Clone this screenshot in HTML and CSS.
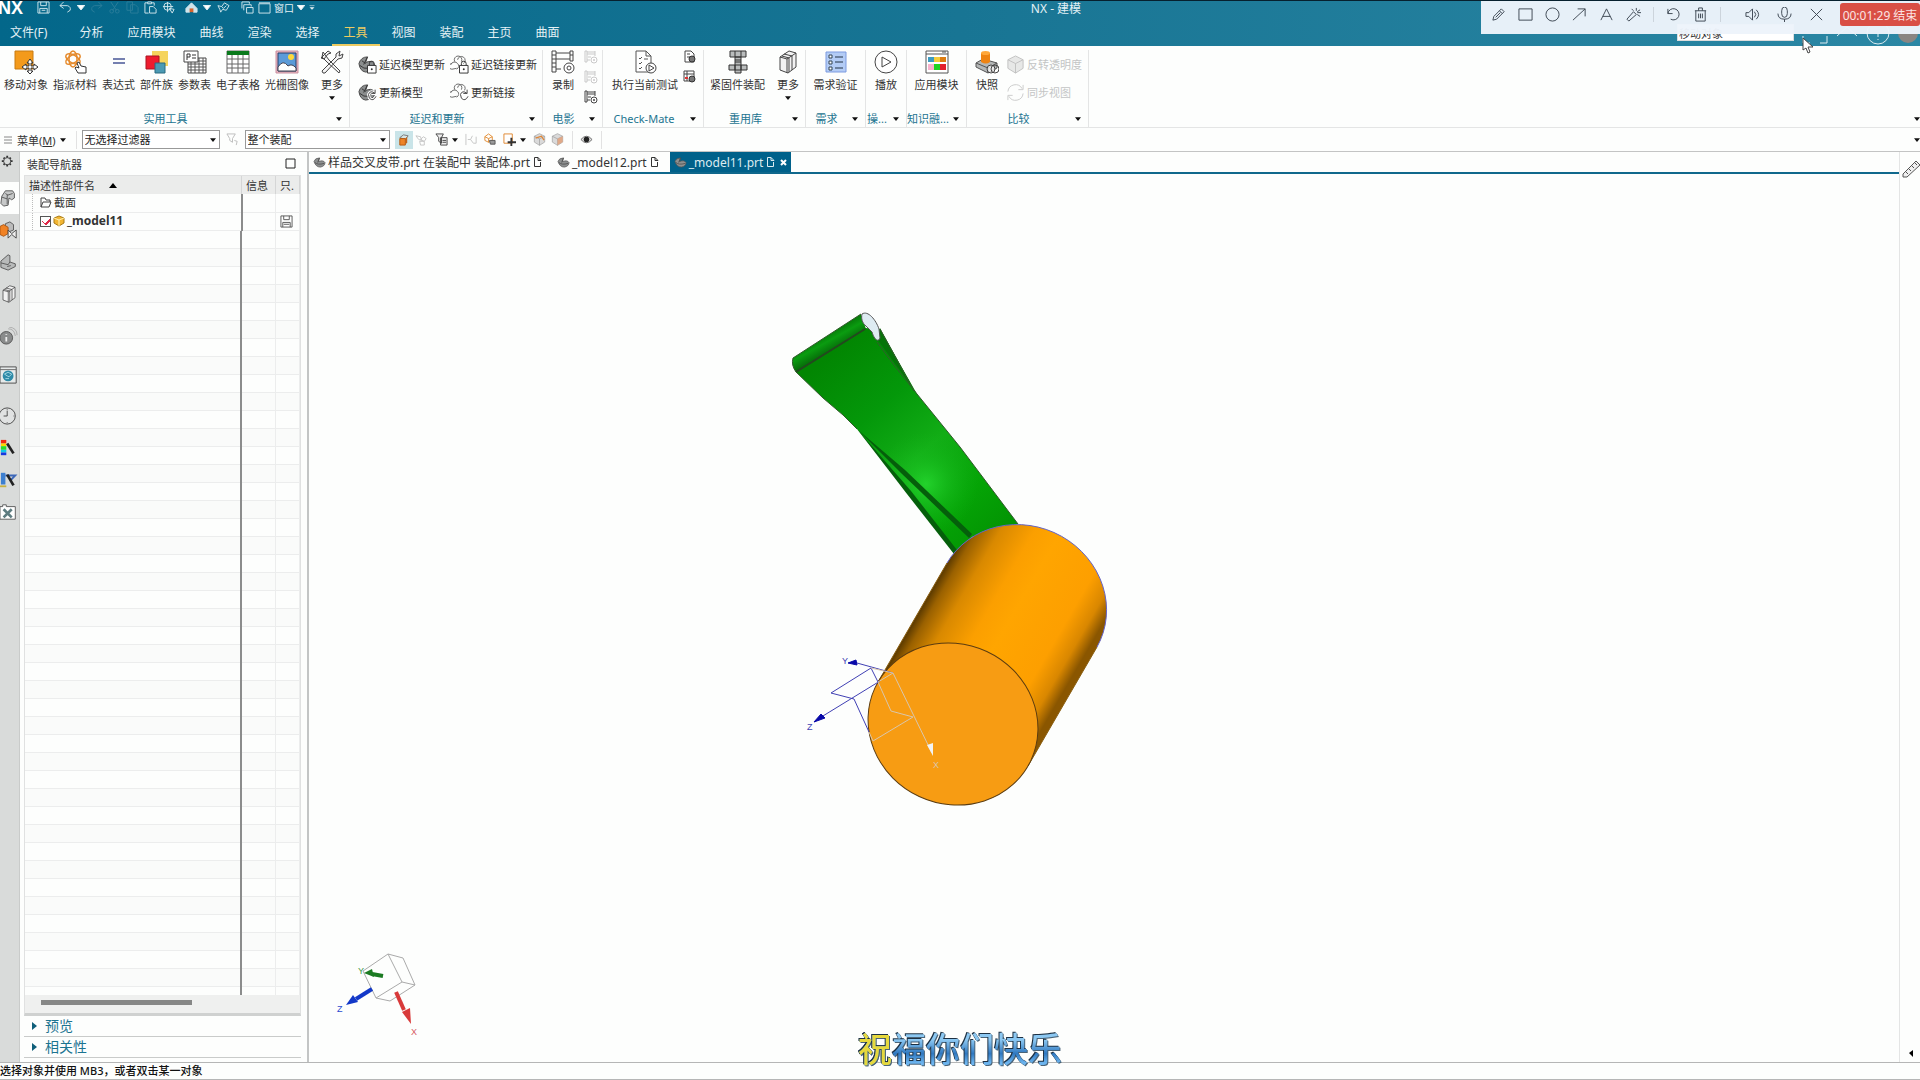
FILE: index.html
```html
<!DOCTYPE html>
<html lang="zh-CN">

<head>
    <meta charset="UTF-8">
    <meta name="viewport" content="width=device-width, initial-scale=1.0">
    <title>NX - 建模</title>
    <link rel="stylesheet" href="styles.css">
</head>

<body>
    <!-- Shared icons -->
    <svg class="defs" aria-hidden="true">
        <symbol id="caret" viewBox="0 0 8 5"><path d="M0 0h8L4 5z" fill="currentColor"/></symbol>
        <symbol id="part" viewBox="0 0 14 12">
            <path d="M1 5Q2 1 7 1l-1 4q5-2 7 1 0 4-5 5-5 0-7-6z" fill="#8d9090" stroke="#555" stroke-width=".8"/>
            <path d="M2 6q3 3 10 1M7 1L5 6" fill="none" stroke="#444" stroke-width=".8"/>
        </symbol>
        <symbol id="page" viewBox="0 0 8 10"><path d="M4 .5H.5v9h6V5M4 .5v3h3L4 .5" fill="none" stroke="currentColor"/></symbol>
        <symbol id="books" viewBox="0 0 24 24">
            <path d="M4 7l9-6 7 2v14l-8 6-8-3z" fill="#f2f2f2" stroke="#444"/>
            <path d="M4 7l7 2 9-6M11 9v14M6 6l7 2M13 8v14M8 4l8 2M16 6v14" fill="none" stroke="#444"/>
        </symbol>
        <symbol id="model" viewBox="0 0 20 20">
            <path d="M1 9Q3 2 10 2L8 8q6-3 9 1v5q-3 4-9 4-6-1-7-9z" fill="#8b8e8e" stroke="#444"/>
            <path d="M2 11q4 4 9 3M10 2L6 10M4 6l4 3" fill="none" stroke="#333"/>
        </symbol>
        <symbol id="chain" viewBox="0 0 20 20">
            <path d="M5 7a4 4 0 1 1 7 0M2 9a3 3 0 0 0 0 6l5-1M1 10a4 4 0 0 1 7-1q3 3-1 6M8 5a4 4 0 1 1 6 4" fill="none" stroke="#666"/>
        </symbol>
        <symbol id="lock" viewBox="0 0 20 20">
            <path d="M12 11V9a2.500 2.500 0 0 1 5 0v2" fill="none" stroke="#333"/>
            <path d="M10 11h9v8h-9z" fill="#fff" stroke="#333"/><circle cx="14.500" cy="15" r="1" fill="#333"/>
        </symbol>
        <symbol id="sync" viewBox="0 0 20 20">
            <path d="M18 11q-5-4-7 1l1 4q4 4 7-2M18 7v4h-4" fill="none" stroke="#fff" stroke-width="3"/>
            <path d="M18 11q-5-4-7 1l1 4q4 4 7-2M18 7v4h-4" fill="none" stroke="#444"/>
        </symbol>
        <symbol id="film" viewBox="0 0 14 14">
            <path d="M1 1h2v11H1zM3 4h8M3 2h8M11 1v5M3 10h3M4 7h3" fill="none" stroke="currentColor"/>
            <circle cx="10" cy="10" r="3" fill="#fff" stroke="currentColor"/><circle cx="10" cy="10" r="1" fill="currentColor"/>
        </symbol>
        <symbol id="cube" viewBox="0 0 20 20">
            <path d="M10 1l8 4v9l-8 5-8-5V5z" fill="#dadada" stroke="#999"/>
            <path d="M2 5l8 4 8-4M10 9v10" fill="none" stroke="#999"/>
        </symbol>
    </svg>

    <header class="header">
        <div class="title-row">
            <span class="logo">NX</span>
            <div class="quick">
                <button class="q q-save" aria-label="保存"><svg viewBox="0 0 14 14"><path d="M1 1h12v12H1zM4 1v4h6V1M3 13V8h8v5M5 10h4" /></svg></button>
                <button class="q" aria-label="撤消"><svg viewBox="0 0 14 14"><path d="M5 1L1 5l4 3M1 5h8q4 1 3 5l-3 2"/></svg></button>
                <button class="q q-caret" aria-label="撤消列表"><svg><use href="#caret"/></svg></button>
                <button class="q dim" aria-label="重做"><svg viewBox="0 0 14 14"><path d="M9 1l4 4-4 3M13 5H5q-4 1-3 5l3 2"/></svg></button>
                <button class="q dim" aria-label="剪切"><svg viewBox="0 0 14 14"><path d="M3 1l6 9M11 1L5 10"/><circle cx="4" cy="11" r="2"/><circle cx="10" cy="11" r="2"/></svg></button>
                <button class="q dim" aria-label="复制"><svg viewBox="0 0 14 14"><path d="M1 1h6v9H1zM5 4h5l3 3v6H5z"/></svg></button>
                <button class="q" aria-label="粘贴"><svg viewBox="0 0 14 14"><path d="M4 2H1v11h4M4 1h4v2H4zM8 2h3v3M6 6h4l3 3v4H6z"/></svg></button>
                <button class="q" aria-label="重复命令"><svg viewBox="0 0 14 14"><circle cx="6" cy="6" r="4"/><path d="M1 6h11M6 1v11M8 8l5 1-2 4z"/></svg></button>
                <button class="q q-home" aria-label="触控"><svg viewBox="0 0 14 14"><path d="M1 8l6-6 6 6v4H9V8H5v4H1z" fill="#cfe3ea"/><path d="M5 8h4v4H5z" fill="#d8632b" stroke="none"/></svg></button>
                <button class="q q-caret" aria-label="触控列表"><svg><use href="#caret"/></svg></button>
                <button class="q q-gap" aria-label="捕捉"><svg viewBox="0 0 14 14"><path d="M1 5l4 1 3-4 5 3-3 5-4-1-2 3-1-3zM5 6l2 2 3-3"/></svg></button>
                <button class="q q-gap" aria-label="层叠"><svg viewBox="0 0 14 14"><path d="M1 8V1h8v2M3 10V4h8v2M6 7h7v6H6z"/></svg></button>
                <button class="q q-window"><svg viewBox="0 0 14 14"><path d="M1 3h12v10H1zM1 2h12"/></svg>窗口<svg class="caret"><use href="#caret"/></svg></button>
                <button class="q q-caret" aria-label="自定义"><svg viewBox="0 0 8 8"><path d="M0 1h8M1 4h6L4 7z" fill="#fff"/></svg></button>
            </div>
            <h1 class="title">NX - 建模</h1>
        </div>
        <nav class="tabs">
            <a class="tab tab-file" href="#">文件(F)</a>
            <a class="tab" href="#">分析</a>
            <a class="tab" href="#">应用模块</a>
            <a class="tab" href="#">曲线</a>
            <a class="tab" href="#">渲染</a>
            <a class="tab" href="#">选择</a>
            <a class="tab active" href="#">工具</a>
            <a class="tab" href="#">视图</a>
            <a class="tab" href="#">装配</a>
            <a class="tab" href="#">主页</a>
            <a class="tab" href="#">曲面</a>
            <div class="header-tools">
                <input class="finder" type="text" aria-label="命令查找器" value="移动对象">
                <button aria-label="全屏"><svg width="26" height="22" viewBox="0 0 26 22"><path d="M1 14v7h7M18 21h7v-7" fill="none" stroke="#dcebf0"/></svg></button>
                <button aria-label="最小化功能区"><svg width="22" height="22" viewBox="0 0 22 22"><path d="M1 14L11 5l10 9" fill="none" stroke="#dcebf0"/></svg></button>
                <button aria-label="帮助"><svg width="24" height="24" viewBox="0 0 24 24"><circle cx="12" cy="12" r="11" fill="none" stroke="#dcebf0"/><path d="M12 12v4M12 18v1" stroke="#dcebf0"/></svg></button>
                <button aria-label="用户"><svg width="20" height="20" viewBox="0 0 20 20"><circle cx="10" cy="10" r="10" fill="#8a8582"/></svg></button>
            </div>
        </nav>
    </header>

    <section class="ribbon">
        <div class="group g-utility">
            <div class="group-body">
                <button class="big"><svg viewBox="0 0 24 24"><path d="M1 1h18v18H1z" fill="#f39a1c" stroke="#c87a10"/><path d="M16 9l3 4h-2v3h3v-2l4 3-4 3v-2h-3v3h2l-3 3-3-3h2v-3h-3v2l-4-3 4-3v2h3v-3h-2z" fill="#fff" stroke="#333"/></svg>移动对象</button>
                <button class="big"><svg viewBox="0 0 24 24"><g fill="none" stroke="#e58a2c" stroke-width="1.500"><ellipse cx="10" cy="9" rx="4" ry="8"/><ellipse cx="10" cy="9" rx="4" ry="8" transform="rotate(60 10 9)"/><ellipse cx="10" cy="9" rx="4" ry="8" transform="rotate(120 10 9)"/></g><path d="M15 23l-3-5 1-1 3 1-2-5 2-1 2 4 5 1v6z" fill="#fff" stroke="#333"/></svg>指派材料</button>
                <button class="big"><svg viewBox="0 0 24 24"><path d="M6 9h12M6 13h12" stroke="#7580b0" stroke-width="2"/></svg>表达式</button>
                <button class="big"><svg viewBox="0 0 24 24"><path d="M7 1h16v15H7z" fill="#f5d45e"/><path d="M1 6h13v13H1z" fill="#ee1c2e" stroke="#a81522"/><path d="M10 13h10v10H10z" fill="#4b9ab4" stroke="#2b6a80"/></svg>部件族</button>
                <button class="big"><svg viewBox="0 0 24 24"><path d="M5 8h18v15H5z" fill="#fff" stroke="#444"/><path d="M5 11h18M5 14h18M5 17h18M5 20h18M8 8v15M12 8v15M16 8v15M20 8v15" stroke="#555"/><path d="M1 1h14v11H1z" fill="#fff" stroke="#444"/><path d="M4 10V4h3v3H4M9 5h4M9 8h4" fill="none" stroke="#333"/></svg>参数表</button>
                <button class="big"><svg viewBox="0 0 24 24"><path d="M1 1h22v22H1z" fill="#fff" stroke="#666"/><path d="M1 1h22v4H1z" fill="#0a7a1c"/><path d="M1 9h22M1 14h22M1 18h22M6 5v18M12 5v18M17 5v18" stroke="#666"/></svg>电子表格</button>
                <button class="big"><svg viewBox="0 0 24 24"><path d="M1 1h22v22H1z" fill="#e7b4c0" stroke="#c9909f"/><path d="M3 3h18v18H3z" fill="#5c9bd8" stroke="#28406a"/><circle cx="16" cy="7" r="3" fill="#ffd83a"/><path d="M3 21v-4q5-8 10-1 4-3 8 2v3z" fill="#fff" stroke="#445"/></svg>光栅图像</button>
                <button class="big more"><svg viewBox="0 0 24 24"><path d="M3 2l6 8 11 11-1 2L7 12 2 7zM1 8L8 1l3 2-3 1-4 5zM20 1l-4 3v3L2 21l1 2 2 0L18 9l4-1 1-4-4 2z" fill="#f4f4f4" stroke="#444"/></svg>更多<svg class="caret"><use href="#caret"/></svg></button>
            </div>
            <div class="group-name"><span>实用工具</span><svg class="caret"><use href="#caret"/></svg></div>
        </div>
        <div class="group g-update">
            <div class="group-body pairs">
                <button class="small"><svg viewBox="0 0 20 20"><use href="#model"/><use href="#lock"/></svg>延迟模型更新</button>
                <button class="small"><svg viewBox="0 0 20 20"><use href="#chain"/><use href="#lock"/></svg>延迟链接更新</button>
                <button class="small"><svg viewBox="0 0 20 20"><use href="#model"/><use href="#sync"/></svg>更新模型</button>
                <button class="small"><svg viewBox="0 0 20 20"><use href="#chain"/><use href="#sync"/></svg>更新链接</button>
            </div>
            <div class="group-name"><span>延迟和更新</span><svg class="caret"><use href="#caret"/></svg></div>
        </div>
        <div class="group g-movie">
            <div class="group-body">
                <button class="big"><svg viewBox="0 0 24 24"><path d="M1 1h4v21H1zM5 3h14M5 9h14M19 1h3v10h-3zM5 19h5M1 5h4M1 9h4M1 13h4M1 17h4M19 5h3" fill="none" stroke="#444"/><circle cx="18" cy="18" r="5" fill="#fff" stroke="#444"/><circle cx="18" cy="18" r="2" fill="none" stroke="#444"/></svg>录制</button>
                <div class="minis">
                    <button class="mini off" aria-label="暂停"><svg><use href="#film"/></svg></button>
                    <button class="mini off" aria-label="停止"><svg><use href="#film"/></svg></button>
                    <button class="mini" aria-label="设置"><svg><use href="#film"/></svg></button>
                </div>
            </div>
            <div class="group-name"><span>电影</span><svg class="caret"><use href="#caret"/></svg></div>
        </div>
        <div class="group g-check">
            <div class="group-body">
                <button class="big"><svg viewBox="0 0 24 24"><path d="M3 1h10l5 5v16H3z" fill="#fff" stroke="#555"/><path d="M13 1v5h5M6 8l1 1 2-2M11 9h4M6 13l1 1 2-2M6 18l1 1 2-2" fill="none" stroke="#555"/><circle cx="18" cy="18" r="5" fill="#fff" stroke="#444"/><path d="M16 15l5 3-5 3z" fill="none" stroke="#444"/></svg>执行当前测试</button>
                <div class="minis">
                    <button class="mini" aria-label="查看结果"><svg viewBox="0 0 14 14"><path d="M2 1h6l3 3v8H2zM4 4h3M4 7h3" fill="#fff" stroke="#444"/><circle cx="9" cy="9" r="3" fill="#777" stroke="#333"/></svg></button>
                    <button class="mini" aria-label="编辑测试"><svg viewBox="0 0 14 14"><path d="M1 1h10v10H1zM1 4h10M4 1v10" fill="#fff" stroke="#444"/><path d="M2 8h3" stroke="#d33" stroke-width="2"/><circle cx="9" cy="9" r="3" fill="#777" stroke="#333"/></svg></button>
                </div>
            </div>
            <div class="group-name"><span>Check-Mate</span><svg class="caret"><use href="#caret"/></svg></div>
        </div>
        <div class="group g-reuse">
            <div class="group-body">
                <button class="big"><svg viewBox="0 0 24 24"><path d="M4 1h16v6H4zM9 7h6v16H9zM3 15h18v5H3z" fill="#b9bcbc" stroke="#333"/><path d="M9 1v6M15 1v6M9 10h6M9 12h6M9 15v5M15 15v5" stroke="#333"/></svg>紧固件装配</button>
                <button class="big more"><svg><use href="#books"/></svg>更多<svg class="caret"><use href="#caret"/></svg></button>
            </div>
            <div class="group-name"><span>重用库</span><svg class="caret"><use href="#caret"/></svg></div>
        </div>
        <div class="group g-need">
            <div class="group-body">
                <button class="big"><svg viewBox="0 0 24 24"><path d="M2 2h20v20H2z" fill="#b3ccf5" stroke="#7d9be0"/><path d="M5 5h3v3H5zM5 11h3v3H5zM5 17h3v3H5z" fill="#fff" stroke="#345"/><path d="M11 7h8M11 12h8M11 18h8" stroke="#234"/></svg>需求验证</button>
            </div>
            <div class="group-name"><span>需求</span><svg class="caret"><use href="#caret"/></svg></div>
        </div>
        <div class="group g-play">
            <div class="group-body">
                <button class="big"><svg viewBox="0 0 24 24"><circle cx="12" cy="12" r="11" fill="#fff" stroke="#444"/><path d="M8 7l9 5-9 5z" fill="none" stroke="#444"/></svg>播放</button>
            </div>
            <div class="group-name"><span>操...</span><svg class="caret"><use href="#caret"/></svg></div>
        </div>
        <div class="group g-fusion">
            <div class="group-body">
                <button class="big"><svg viewBox="0 0 24 24"><path d="M1 1h22v22H1z" fill="#fff" stroke="#555"/><path d="M1 4h22M17 2h4" stroke="#555"/><path d="M3 7h6v5H3z" fill="#3d9bc0"/><path d="M9 7h6v5H9z" fill="#f5cc3a"/><path d="M15 7h6v5h-6z" fill="#dd7d12"/><path d="M3 14h6v6H3z" fill="#f7b2cc"/><path d="M9 14h6v6H9z" fill="#1fd320"/><path d="M15 14h6v6h-6z" fill="#e2202c"/></svg>应用模块</button>
            </div>
            <div class="group-name"><span>知识融...</span><svg class="caret"><use href="#caret"/></svg></div>
        </div>
        <div class="group g-compare">
            <div class="group-body">
                <button class="big"><svg viewBox="0 0 24 24"><path d="M1 13l7-4 14 4v5l-9 5-12-6z" fill="#b4b7b7" stroke="#555"/><path d="M1 13l12 5 9-5M13 18v5" fill="none" stroke="#555"/><path d="M6 3v9q5 3 9 0V3z" fill="#ee8312"/><ellipse cx="10.500" cy="3" rx="4.500" ry="2" fill="#ffa73a"/><circle cx="16" cy="19" r="4" fill="#fff" fill-opacity=".7" stroke="#444"/><circle cx="20" cy="19" r="4" fill="none" stroke="#444"/></svg>快照</button>
                <div class="column">
                    <button class="small" disabled><svg><use href="#cube"/></svg>反转透明度</button>
                    <button class="small" disabled><svg viewBox="0 0 20 20"><path d="M2 9a8 8 0 0 1 15-3M18 2v5h-5M18 11a8 8 0 0 1-15 3M2 18v-5h5" fill="none" stroke="#aaa"/></svg>同步视图</button>
                </div>
            </div>
            <div class="group-name"><span>比较</span><svg class="caret"><use href="#caret"/></svg></div>
        </div>
        <button class="overflow" aria-label="功能区选项"><svg class="caret"><use href="#caret"/></svg></button>
    </section>

    <section class="selection-bar">
        <button class="menu-button"><svg width="10" height="10" viewBox="0 0 10 10"><path d="M1 2h8M1 5h8M1 8h8" stroke="#888"/></svg><span>菜单(<u>M</u>)</span><svg class="caret"><use href="#caret"/></svg></button>
        <span class="sep"></span>
        <div class="drop drop-type">
            <select aria-label="类型过滤器"><option>无选择过滤器</option></select>
            <svg class="caret"><use href="#caret"/></svg>
        </div>
        <button class="s" aria-label="过滤"><svg viewBox="0 0 14 14"><path d="M1 1h9L7 6v4L4 8V6zM9 8l3 1-1 4" fill="none" stroke="#bbb"/></svg></button>
        <div class="drop drop-scope">
            <select aria-label="选择范围"><option>整个装配</option></select>
            <svg class="caret"><use href="#caret"/></svg>
        </div>
        <button class="s on" aria-label="允许选择"><svg viewBox="0 0 14 14"><path d="M3 5l4-3 5 1-3 4z" fill="#d5e4e4" stroke="#777"/><path d="M3 6h6v7H3z" fill="#ee8427" stroke="#b35b12"/><path d="M9 6l2-2v6l-2 3z" fill="#c0641c"/></svg></button>
        <button class="s" aria-label="链接"><svg viewBox="0 0 14 14"><path d="M1 3l5 1 1 4-3-1zM6 7l3-3 3 2-2 3zM5 9h5v4H6z" fill="none" stroke="#c5c5c5"/></svg></button>
        <button class="s wide" aria-label="选择列表"><svg viewBox="0 0 14 14"><path d="M1 1h8L7 5v6L4 9V5zM6 5h7v8H6zM8 8h4M8 10h4" fill="#eee" stroke="#444"/></svg><svg class="caret"><use href="#caret"/></svg></button>
        <button class="s" aria-label="连接"><svg viewBox="0 0 14 14"><path d="M1 1v12M3 7h3l2-4M6 7l3 4h3V4" fill="none" stroke="#c5c5c5"/></svg></button>
        <button class="s" aria-label="选择体"><svg viewBox="0 0 14 14"><path d="M2 4l4-3 4 3v4l-4 2-4-2zM2 4l4 2 4-2M6 6v4" fill="none" stroke="#e28a30"/><path d="M7 8h6v4H8z" fill="#999" stroke="#555"/></svg></button>
        <button class="s wide" aria-label="矩形选择"><svg viewBox="0 0 14 14"><path d="M1 1h9v10H1z" fill="#fff" stroke="#e0862d"/><path d="M9 5v9M5 10h9" stroke="#333" stroke-width="2"/></svg><svg class="caret"><use href="#caret"/></svg></button>
        <button class="s" aria-label="隐藏"><svg viewBox="0 0 20 20"><use href="#cube"/><path d="M4 8l9-3 4 6" fill="none" stroke="#df8636" stroke-width="2"/></svg></button>
        <button class="s" aria-label="显示"><svg viewBox="0 0 20 20"><use href="#cube"/><path d="M10 9l8-4v9l-8 5z" fill="#e0a988"/></svg></button>
        <span class="sep"></span>
        <button class="s" aria-label="可见"><svg viewBox="0 0 14 14"><path d="M1 7q6-7 12 0-6 7-12 0z" fill="#e6e6e6" stroke="#666"/><circle cx="7" cy="7" r="3" fill="#222"/></svg></button>
        <span class="sep"></span>
        <button class="overflow" aria-label="选择条选项"><svg class="caret"><use href="#caret"/></svg></button>
    </section>

    <main class="workspace">
        <nav class="rail">
            <button class="rail-gear" aria-label="资源条选项"><svg viewBox="0 0 20 20"><circle cx="8" cy="8" r="4" fill="none" stroke="#333"/><path d="M8 2v2M8 12v2M2 8h2M12 8h2M4 4l1 1M11 11l1 1M4 12l1-1M11 5l1-1" stroke="#333" stroke-width="2"/></svg></button>
            <button class="current" aria-label="装配导航器"><svg viewBox="0 0 20 20"><path d="M2 8l4-6 8 0 2 3v5l-3 2-3-2-1 8-5 1-3-3z" fill="#c6c8c8" stroke="#555"/><path d="M2 9l6 2V7l6-2M8 11v6M6 5l3 2" fill="none" stroke="#555"/></svg></button>
            <button aria-label="约束导航器"><svg viewBox="0 0 20 20"><path d="M6 3l5-2 4 3v6l-5 2-4-3z" fill="#bbb" stroke="#555"/><path d="M0 6l4-2 5 3v7l-5 3-4-2z" fill="#f08224" stroke="#a85312"/><path d="M9 10l4 4 5-4v9l-5-4-4 4z" fill="#eee" stroke="#444"/></svg></button>
            <button aria-label="部件导航器"><svg viewBox="0 0 20 20"><path d="M1 9l8-7 2 1v7l6 2v3l-8 4-8-3z" fill="#b8baba" stroke="#555"/><path d="M1 11l8 2 2-3M8 15l4-1" fill="none" stroke="#555"/></svg></button>
            <button aria-label="重用库"><svg><use href="#books"/></svg></button>
            <button class="rail-info" aria-label="HD3D 工具"><svg viewBox="0 0 20 20"><path d="M9 2q7 0 8 8M10 0q9 1 9 9" fill="none" stroke="#aaa"/><circle cx="7" cy="12" r="7" fill="#8a8c8c" stroke="#555"/><path d="M7 8v1M7 11v5" stroke="#eee" stroke-width="2"/></svg></button>
            <button class="rail-web" aria-label="Web 浏览器"><svg viewBox="0 0 20 20"><path d="M0 1h18v18H0z" fill="#e6eaea" stroke="#444"/><path d="M0 4h18" stroke="#666"/><circle cx="9" cy="11" r="6" fill="#2f8ba8"/><path d="M5 9l4-2 4 2-3 3-2-1zM6 14l4 0" fill="none" stroke="#a9dbe6"/></svg></button>
            <button aria-label="历史记录"><svg viewBox="0 0 20 20"><circle cx="8" cy="10" r="9" fill="#e0e2e2" stroke="#444"/><path d="M8 4v6H4M8 2v1M8 17v1M15 10h1" fill="none" stroke="#444"/></svg></button>
            <button aria-label="材料"><svg viewBox="0 0 20 20"><path d="M1 1h6v4H1z" fill="#f02a10"/><path d="M1 5h6v3H1z" fill="#ffd800"/><path d="M1 8h6v4H1z" fill="#2bdd2b"/><path d="M1 12h6v3H1z" fill="#10c8e8"/><path d="M1 15h6v3H1z" fill="#1738e0"/><path d="M8 5l7 11" stroke="#222" stroke-width="3"/></svg></button>
            <button aria-label="加工"><svg viewBox="0 0 20 20"><path d="M1 2h5v13H1z" fill="#3d7fd0"/><path d="M0 17h7" stroke="#c8b040" stroke-width="2"/><path d="M6 5h11l-5 5" fill="none" stroke="#3c67b8" stroke-width="2"/><path d="M8 4l7 12" stroke="#222" stroke-width="3"/></svg></button>
            <button aria-label="系统可视化"><svg viewBox="0 0 20 20"><path d="M0 4h3V2h4v2h10v14H0z" fill="#fff" stroke="#555"/><path d="M4 7l9 9M13 7l-9 9" stroke="#5d7c80" stroke-width="3"/></svg></button>
        </nav>

        <aside class="navigator">
            <div class="nav-title"><h2>装配导航器</h2><button aria-label="最大化"><svg width="11" height="11" viewBox="0 0 11 11"><path d="M1 1h9v9H1z" fill="none" stroke="#222"/></svg></button></div>
            <div class="tree">
                <table>
                    <thead>
                        <tr><th>描述性部件名<svg class="sort" viewBox="0 0 8 5"><path d="M0 5h8L4 0z"/></svg></th><th>信息</th><th>只.</th></tr>
                    </thead>
                    <tbody>
                        <tr><td><div class="node"><svg width="12" height="11" viewBox="0 0 12 11"><path d="M1 10V1h4l1 2h4v2M1 10l2-5h8l-2 5z" fill="none" stroke="#444"/></svg>截面</div></td><td></td><td></td></tr>
                        <tr><td><div class="node"><input type="checkbox" id="model11" checked><svg width="12" height="12" viewBox="0 0 12 12"><path d="M1 3l5-2 5 2v5l-5 3-5-3z" fill="#f2b632" stroke="#a97a16"/><path d="M1 3l5 2v6M6 5l5-2" fill="none" stroke="#fff0b0"/></svg><label for="model11">_model11</label></div></td><td></td><td><svg class="disk" viewBox="0 0 14 14"><path d="M1 1h12v12H1zM4 1v4h6V1M3 13V8h8v5M4 10h6" fill="none" stroke="#555"/></svg></td></tr>
                    </tbody>
                </table>
                <div class="tree-fill"><span></span><span></span><span></span></div>
                <div class="hscroll"><div class="thumb"></div></div>
            </div>
            <button class="fold"><svg viewBox="0 0 5 8"><path d="M0 0v8l5-4z"/></svg>预览</button>
            <button class="fold"><svg viewBox="0 0 5 8"><path d="M0 0v8l5-4z"/></svg>相关性</button>
        </aside>

        <section class="stage">
            <div class="doc-tabs">
                <button class="doc"><svg class="part"><use href="#part"/></svg>样品交叉皮带.prt 在装配中 装配体.prt<svg class="page"><use href="#page"/></svg></button>
                <button class="doc"><svg class="part"><use href="#part"/></svg>_model12.prt<svg class="page"><use href="#page"/></svg></button>
                <button class="doc active"><svg class="part"><use href="#part"/></svg>_model11.prt<svg class="page"><use href="#page"/></svg><svg class="close" viewBox="0 0 7 7"><path d="M1 1l5 5M6 1L1 6" stroke="#fff" stroke-width="2"/></svg></button>
            </div>
            <div class="canvas">
                <!-- Belt and roller -->
                <svg class="scene" width="380" height="540" viewBox="0 0 380 540">
                    <defs>
                        <linearGradient id="roller" gradientUnits="userSpaceOnUse" x1="118" y1="392" x2="261" y2="475">
                            <stop offset="0" stop-color="#5a3900"/>
                            <stop offset=".06" stop-color="#9a6100"/>
                            <stop offset=".18" stop-color="#d98900"/>
                            <stop offset=".36" stop-color="#fb9f00"/>
                            <stop offset=".5" stop-color="#ffa500"/>
                            <stop offset=".8" stop-color="#fd9f00"/>
                            <stop offset=".92" stop-color="#d98700"/>
                            <stop offset="1" stop-color="#8a5600"/>
                        </linearGradient>
                        <linearGradient id="belt" gradientUnits="userSpaceOnUse" x1="75" y1="60" x2="235" y2="245">
                            <stop offset="0" stop-color="#028602"/>
                            <stop offset=".3" stop-color="#04980a"/>
                            <stop offset=".55" stop-color="#12ad16"/>
                            <stop offset=".8" stop-color="#05a406"/>
                            <stop offset="1" stop-color="#039503"/>
                        </linearGradient>
                        <linearGradient id="bend" gradientUnits="userSpaceOnUse" x1="62" y1="44" x2="72" y2="62">
                            <stop offset="0" stop-color="#057007"/>
                            <stop offset=".45" stop-color="#0a9c10"/>
                            <stop offset="1" stop-color="#056808"/>
                        </linearGradient>
                        <radialGradient id="shine" gradientUnits="userSpaceOnUse" cx="166" cy="194" r="52">
                            <stop offset="0" stop-color="#29dc33" stop-opacity=".8"/>
                            <stop offset=".5" stop-color="#1cc424" stop-opacity=".4"/>
                            <stop offset="1" stop-color="#12b418" stop-opacity="0"/>
                        </radialGradient>
                    </defs>
                    <path d="M105 38L36 82 63 108 83 125 97 139 150 205 195 262 212 247 258 234 200 157 157 104 120 39z" fill="url(#belt)"/>
                    <path d="M105 38L36 82 63 108 83 125 97 139 150 205 195 262 212 247 258 234 200 157 157 104 120 39z" fill="url(#shine)"/>
                    <path d="M117 49l3-11 33 60-18-24z" fill="#067409"/>
                    <path d="M101 24L33 68q-2 7 3 14l70-43z" fill="url(#bend)"/>
                    <path d="M36 82l69-43" stroke="#24481f" stroke-width="2"/>
                    <path d="M117 52l17 23 23 29 43 53 58 77M120 39l34 62M36 82l27 26 20 17 14 14M101 24L33 68q-2 7 3 14" fill="none" stroke="#315a2b"/>
                    <path d="M97 139l48 41 67 64-3 4-68-65z" fill="#055f0b"/>
                    <path d="M97 139l54 62 46 59-3 4-47-60z" fill="#055f0b"/>
                    <path d="M102 24c6-4 14 6 17 15l1 9c-2 5-6 1-8-6l-6-6c-4-3-5-8-4-12z" fill="#deebf2" stroke="#555"/>
                    <path d="M187 273A86 80 25 0 1 337 357L268 476 118 392z" fill="url(#roller)"/>
                    <path d="M187 273A86 80 25 0 1 337 357" fill="none" stroke="#6464c8"/>
                    <path d="M187 273L118 392M337 357L268 476" fill="none" stroke="#8a5e10"/>
                    <ellipse cx="193" cy="434" rx="86" ry="80" transform="rotate(25 193 434)" fill="#f79c13" stroke="#5b3c10"/>
                    <path d="M97 373l36 10M111 378L71 403l23 6M120 391l-62 38M94 409l15 33M111 378l7 14" fill="none" stroke="#4040b4"/>
                    <path d="M133 383l-15 9 13 29 22 6-40 24-4-9M111 378l22 5 39 80" fill="none" stroke="#d9c6ac"/>
                    <path d="M88 373l8-3 1 5zM54 432l7-8 4 4z" fill="#0808a8" stroke="#0808a8"/>
                    <path d="M167 455l6 11v-13z" fill="#f2f2f2"/>
                    <g class="axis">
                        <text x="82" y="374" fill="#4040b4">Y</text>
                        <text x="47" y="440" fill="#4040b4">Z</text>
                        <text x="173" y="478" fill="#d9c6ac">X</text>
                    </g>
                </svg>
                <!-- View triad -->
                <svg class="triad" width="120" height="120" viewBox="0 0 120 120">
                    <path d="M43 41l25-17 15 4 12 27-25 16-14-3zM68 24l14 28 13 3M82 52L56 68" fill="none" stroke="#aaa"/>
                    <path d="M63 46l-11-2" stroke="#1b7a22" stroke-width="4"/><path d="M44 43l8-4 2 8z" fill="#1b7a22"/>
                    <path d="M52 59L36 69" stroke="#1238c8" stroke-width="4"/><path d="M26 75l7-10 5 7z" fill="#1238c8"/>
                    <path d="M76 62l8 18" stroke="#d83a3a" stroke-width="4"/><path d="M91 94l-9-12 8-4z" fill="#d83a3a"/>
                    <g class="axis">
                        <text x="38" y="44" fill="#3e9a44">Y</text>
                        <text x="17" y="82" fill="#2b4ad0">Z</text>
                        <text x="91" y="105" fill="#d65a62">X</text>
                    </g>
                </svg>
            </div>
        </section>
        <div class="right-rail">
            <button aria-label="测量"><svg width="18" height="18" viewBox="0 0 18 18"><path d="M1 14L14 1l4 4L5 17H1zM4 12l2 2M7 9l2 2M10 6l2 2M13 3l2 2" fill="#f0f0f0" stroke="#555"/></svg></button>
            <button class="expand" aria-label="展开"><svg width="4" height="7" viewBox="0 0 4 7"><path d="M4 0v7L0 3z"/></svg></button>
        </div>
    </main>

    <footer class="status">选择对象并使用 MB3，或者双击某一对象</footer>

    <!-- Screen recorder bar -->
    <div class="recorder">
        <button aria-label="画笔"><svg viewBox="0 0 16 16"><path d="M2 14l1-4 8-8 3 3-8 8zM9 4l3 3M5 11l5-5"/></svg></button>
        <button aria-label="矩形"><svg viewBox="0 0 16 16"><path d="M1 2h14v12H1z"/></svg></button>
        <button aria-label="椭圆"><svg viewBox="0 0 16 16"><circle cx="8" cy="8" r="7"/></svg></button>
        <button aria-label="箭头"><svg viewBox="0 0 16 16"><path d="M1 14L14 2M6 2h8v8"/></svg></button>
        <button aria-label="文字"><svg viewBox="0 0 16 16"><path d="M2 14L8 2l6 12M4 10h8"/></svg></button>
        <button aria-label="魔棒"><svg viewBox="0 0 16 16"><path d="M1 13l7-8 3 3-8 7zM11 1v3M6 2l2 2M15 3l-3 2M12 8l3 2M12 6h4"/></svg></button>
        <span class="rec-sep"></span>
        <button aria-label="撤销"><svg viewBox="0 0 16 16"><path d="M2 2v5h5M2 7a6 6 0 1 1 3 6"/></svg></button>
        <button aria-label="清除"><svg viewBox="0 0 16 16"><path d="M2 4h12M6 4V1h4v3M3 4v11h10V4M6 7v5M8 7v5M10 7v5"/></svg></button>
        <span class="rec-sep"></span>
        <button class="rec-wide" aria-label="声音"><svg viewBox="0 0 16 16"><path d="M1 6h3l4-4v12l-4-4H1zM10 5q3 3 0 6M12 3q5 5 0 10"/></svg></button>
        <button class="rec-wide" aria-label="麦克风"><svg viewBox="0 0 16 16"><path d="M5 4q0-4 3-4t3 4v3q0 4-3 4T5 7zM1 7q0 6 7 6t7-6M8 13v3"/></svg></button>
        <button class="rec-wide" aria-label="关闭"><svg viewBox="0 0 16 16"><path d="M2 2l12 12M14 2L2 14"/></svg></button>
        <button class="rec-stop">00:01:29 结束</button>
    </div>
    <svg class="pointer" width="12" height="17" viewBox="0 0 12 17"><path d="M1 1v12l3-2 2 5 2-1-2-5h5z" fill="#fff" stroke="#444"/></svg>
    <p class="caption"><span>祝</span>福你们快乐</p>
</body>

</html>
```

FILE: styles.css
```css
* {
    box-sizing: border-box;
}

body {
    display: flex;
    flex-direction: column;
    position: relative;
    height: 100vh;
    margin: 0;
    overflow: hidden;
    background-color: #fdfefd;
    color: #333;
    font-family: "Noto Sans", "Noto Sans CJK SC", sans-serif;
    font-size: 11px;
}

button {
    display: flex;
    align-items: center;
    justify-content: center;
    flex-shrink: 0;
    margin: 0;
    padding: 0;
    border: none;
    background: none;
    color: inherit;
    font: inherit;
    white-space: nowrap;
    cursor: pointer;
}

svg {
    display: block;
    flex-shrink: 0;
}

.defs {
    position: absolute;
    width: 0;
    height: 0;
}

.caret {
    width: 6px;
    height: 4px;
    color: #111;
}

/* Header */
.header {
    flex-shrink: 0;
    height: 46px;
    border-top: 1px solid #06202e;
    background: linear-gradient(90deg, #03678a, #187594 50%, #2b87a4);
    color: #e4f1f5;
}

.title-row {
    display: flex;
    position: relative;
    align-items: center;
    height: 13px;
}

.logo {
    width: 36px;
    margin-left: -2px;
    color: #fff;
    font-family: "Liberation Sans", sans-serif;
    font-size: 18px;
    font-weight: bold;
    line-height: 12px;
}

.quick {
    display: flex;
    align-items: center;
    height: 12px;
}

.q {
    width: 18px;
}

.q svg {
    width: 13px;
    height: 13px;
    fill: none;
    stroke: #d5e8ee;
}

.q.q-save {
    margin-right: 4px;
}

.q.q-caret {
    width: 13px;
}

.q.q-caret svg,
.q .caret {
    width: 8px;
    height: 5px;
    color: #fff;
}

.q.dim svg {
    stroke: #2a7d9a;
}

.q.q-gap {
    width: 21px;
}

.q.q-home {
    margin-left: 5px;
}

.q.q-window {
    width: auto;
    gap: 3px;
    font-size: 10px;
}

.q-gap + .q-gap {
    margin-left: 3px;
}

.title {
    position: absolute;
    left: 55%;
    transform: translateX(-50%);
    margin: 0;
    font-size: 12px;
    font-weight: normal;
}

.tabs {
    display: flex;
    height: 32px;
    font-size: 12px;
}

.tab {
    display: flex;
    align-items: center;
    padding: 6px 12px 0;
    border-bottom: 2px solid transparent;
    color: #e4f1f5;
    text-decoration: none;
}

.tab-file {
    padding-left: 10px;
    padding-right: 20px;
}

.tab.active {
    border-bottom-color: #eccb62;
    color: #eccb62;
}

.header-tools {
    display: flex;
    align-items: center;
    gap: 8px;
    margin-left: auto;
    padding: 5px 2px 0 0;
}

.finder {
    width: 117px;
    height: 17px;
    padding: 0 1px;
    border: 1px solid #ddd;
    background: #fff;
    color: #333;
    font: 11px "Noto Sans CJK SC", sans-serif;
}

/* Ribbon */
.ribbon {
    display: flex;
    flex-shrink: 0;
    height: 82px;
    padding-top: 4px;
    border-bottom: 1px solid #e4e5e5;
}

.group {
    display: flex;
    flex-direction: column;
    justify-content: space-between;
    border-right: 1px solid #e4e5e5;
}

.g-utility { width: 350px; }
.g-update { width: 193px; }
.g-movie { width: 60px; }
.g-check { width: 101px; }
.g-reuse { width: 102px; }
.g-need { width: 60px; }
.g-play { width: 41px; }
.g-fusion { width: 60px; }
.g-compare { width: 122px; }

.group-body {
    display: flex;
    gap: 5px;
    height: 58px;
    padding: 0 7px 0 4px;
}

.big {
    flex-direction: column;
    justify-content: flex-start;
    min-width: 32px;
    line-height: 16px;
    gap: 3px;
}

.big > svg:first-child {
    width: 24px;
    height: 24px;
}

.big.more {
    gap: 3px;
    margin-left: 2px;
}

.pairs {
    display: grid;
    grid-template-columns: 92px 92px;
    align-content: start;
    gap: 0;
    padding-left: 8px;
}

.small {
    justify-content: flex-start;
    height: 28px;
    gap: 2px;
}

.small svg {
    width: 19px;
    height: 19px;
}

.small:disabled {
    color: #c3c5c5;
}

.small:disabled svg {
    opacity: .6;
}

.column,
.minis {
    display: flex;
    flex-direction: column;
}

.minis {
    gap: 6px;
}

.mini svg {
    width: 14px;
    height: 14px;
    color: #444;
}

.mini.off svg {
    color: #c9c9c9;
}

.g-check .group-body {
    padding-left: 9px;
}

.g-need .group-body,
.g-play .group-body,
.g-fusion .group-body {
    justify-content: center;
    padding: 0;
}

.g-reuse .group-body {
    padding-left: 6px;
}

.g-compare .group-body {
    gap: 3px;
}

.group-name {
    display: flex;
    align-items: center;
    gap: 5px;
    height: 16px;
    padding-right: 7px;
    color: #1c7490;
    line-height: 16px;
}

.group-name span {
    flex: 1;
    min-width: 0;
    text-align: center;
    white-space: nowrap;
}

.overflow {
    align-self: flex-end;
    height: 16px;
    margin-left: auto;
}

/* Selection bar */
.selection-bar {
    display: flex;
    align-items: center;
    flex-shrink: 0;
    height: 24px;
    padding-left: 3px;
    border-bottom: 1px solid #c3c4c4;
}

.menu-button {
    gap: 4px;
    padding-right: 5px;
}

.sep {
    width: 1px;
    height: 18px;
    margin: 0 5px;
    background: #e2e2e2;
}

.drop {
    position: relative;
    height: 19px;
}

.drop select {
    width: 100%;
    height: 100%;
    padding: 0 2px;
    border: 1px solid #999;
    background: #fff;
    color: #222;
    font: inherit;
    appearance: none;
}

.drop .caret {
    position: absolute;
    right: 4px;
    top: 8px;
    pointer-events: none;
}

.drop-type {
    width: 138px;
}

.drop-scope {
    width: 145px;
    margin-right: 5px;
}

.s {
    width: 18px;
    height: 18px;
    gap: 4px;
}

.s > svg:first-child {
    width: 13px;
    height: 13px;
}

.drop-type + .s {
    width: 25px;
}

.s.wide {
    width: 32px;
}

.s.on {
    background: #c9e4e8;
}

.selection-bar .overflow {
    align-self: center;
}

/* Workspace */
.workspace {
    display: flex;
    flex: 1;
    min-height: 0;
}

.rail {
    flex-shrink: 0;
    width: 20px;
    border-right: 1px solid #c9cbca;
    background: #d9dbda;
}

.rail button {
    justify-content: flex-start;
    width: 19px;
    height: 32px;
}

.rail svg {
    width: 18px;
    height: 18px;
}

.rail .rail-gear {
    height: 30px;
    padding-bottom: 8px;
}

.rail .current {
    background: #fdfefd;
}

.rail .rail-info {
    height: 28px;
    margin-top: 12px;
}

.rail .rail-web {
    height: 50px;
}

.navigator {
    display: flex;
    flex-direction: column;
    flex-shrink: 0;
    width: 289px;
    padding: 0 6px 4px 4px;
    border-right: 2px solid #c3c5c5;
}

.nav-title {
    display: flex;
    align-items: center;
    justify-content: space-between;
    height: 23px;
    padding: 0 5px 0 3px;
}

.nav-title h2 {
    margin: 0;
    font-size: 11px;
    font-weight: normal;
}

.tree {
    display: flex;
    flex: 1;
    flex-direction: column;
    border: 1px solid #e0e1e1;
    border-bottom: 3px solid #cfd1d0;
}

.tree table {
    width: 100%;
    border-collapse: collapse;
    table-layout: fixed;
}

.tree th {
    height: 18px;
    padding: 0 4px;
    background: #ebeceb;
    border-right: 1px solid #d5d6d6;
    font-weight: normal;
    text-align: left;
    white-space: nowrap;
}

.tree th:nth-child(2),
.tree-fill span:nth-child(2) {
    width: 34px;
}

.tree th:nth-child(3),
.tree-fill span:nth-child(3) {
    width: 24px;
}

.sort {
    display: inline-block;
    width: 8px;
    height: 5px;
    margin: 0 0 2px 14px;
}

.tree td {
    height: 18px;
    padding: 0 4px;
    border-right: 1px solid #eceded;
    border-bottom: 1px solid #eceded;
    line-height: 16px;
}

.tree td:first-child {
    padding-left: 7px;
    border-right: 2px solid #8b8c8c;
}

.node {
    display: flex;
    align-items: center;
    gap: 2px;
    height: 17px;
    padding-left: 7px;
    border-left: 1px dotted #bbb;
}

.node label {
    font-size: 12px;
    font-weight: bold;
}

.node input {
    width: 11px;
    height: 11px;
    margin: 0;
    border: 1px solid #555;
    background: linear-gradient(135deg, transparent 45%, #df2948 45%, #df2948 62%, transparent 62%) 4px 1px / 6px 7px no-repeat,
        linear-gradient(45deg, transparent 40%, #df2948 40%, #df2948 62%, transparent 62%) 1px 4px / 4px 4px no-repeat;
    appearance: none;
}

.disk {
    width: 13px;
    height: 13px;
}

.tree-fill {
    display: flex;
    flex: 1;
    background: repeating-linear-gradient(#fdfefd 0 17px, #eceded 17px 18px, #fafbfa 18px 35px, #eceded 35px 36px);
}

.tree-fill span {
    border-right: 1px solid #eceded;
}

.tree-fill span:first-child {
    flex: 1;
    border-right: 2px solid #8b8c8c;
}

.hscroll {
    height: 18px;
    padding: 5px 108px 6px 16px;
    background: #eff0ef;
}

.thumb {
    height: 5px;
    background: #868786;
}

.fold {
    justify-content: flex-start;
    gap: 8px;
    height: 21px;
    padding: 0 8px;
    border-bottom: 1px solid #c9cbca;
    color: #1c7490;
    font-size: 14px;
    line-height: 20px;
}

.fold svg {
    width: 5px;
    height: 8px;
    fill: #0f5f7a;
}

.stage {
    display: flex;
    flex: 1;
    flex-direction: column;
    min-width: 0;
}

.doc-tabs {
    display: flex;
    height: 22px;
    border-bottom: 2px solid #10688c;
}

.doc {
    gap: 2px;
    padding: 0 8px 0 4px;
    font-size: 12px;
}

.doc.active {
    padding: 0 4px;
    background: #00618a;
    color: #dcebf0;
}

.doc .part {
    width: 13px;
    height: 11px;
}

.doc .page {
    width: 8px;
    height: 10px;
    margin-left: 2px;
}

.doc .close {
    width: 7px;
    height: 7px;
    margin-left: 3px;
}

.doc + .doc {
    margin-left: 3px;
}

.canvas {
    position: relative;
    flex: 1;
}

.scene {
    position: absolute;
    left: 451px;
    top: 116px;
}

.triad {
    position: absolute;
    left: 11px;
    bottom: 12px;
}

.axis {
    font: 9px "Liberation Sans", sans-serif;
}

.right-rail {
    display: flex;
    flex-direction: column;
    justify-content: space-between;
    width: 21px;
    padding: 8px 0 5px 2px;
    border-left: 1px solid #e4e5e5;
}

.status {
    flex-shrink: 0;
    height: 18px;
    border-top: 1px solid #b5b6b6;
    border-bottom: 1px solid #b5b6b6;
    color: #111;
    font-weight: 500;
    line-height: 16px;
}

/* Recorder overlay */
.recorder {
    display: flex;
    position: absolute;
    top: 1px;
    right: 0;
    height: 33px;
    padding: 2px 0 8px 4px;
    background: rgba(237, 244, 251, .97);
}

.recorder button {
    width: 27px;
}

.recorder svg {
    width: 15px;
    height: 15px;
    fill: none;
    stroke: #3b4450;
}

.rec-sep {
    width: 1px;
    height: 15px;
    margin: 4px 6px;
    background: #ccd4dc;
}

.recorder .rec-wide {
    width: 32px;
}

.rec-sep + .rec-wide {
    margin-left: 9px;
}

.recorder .rec-stop {
    width: 80px;
    margin-left: 8px;
    border-radius: 3px;
    background: #d94f45;
    color: #fbe4e2;
    font-size: 12px;
}

.pointer {
    position: absolute;
    top: 37px;
    right: 106px;
}

.caption {
    position: absolute;
    left: 50%;
    bottom: 8px;
    transform: translateX(-50%);
    margin: 0;
    background: linear-gradient(#8cc8f2 30%, #2f78c0 60%, #6cb4ee 80%);
    background-clip: text;
    -webkit-background-clip: text;
    color: transparent;
    filter: drop-shadow(-1px -1px 0 #1d3144) drop-shadow(1px 1px 0 #4a6478);
    font-size: 34px;
    font-weight: 500;
    line-height: 46px;
    white-space: nowrap;
}

.caption span {
    color: #e6d83c;
}
```
